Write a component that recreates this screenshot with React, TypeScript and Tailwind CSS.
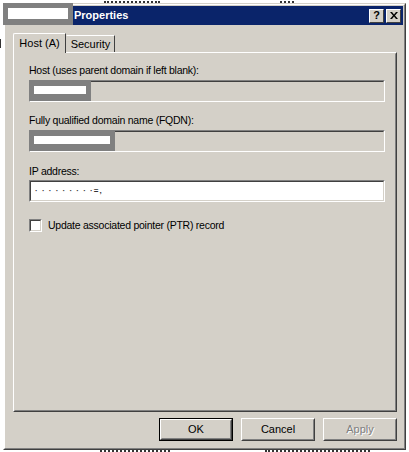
import React from "react";

const font = { fontFamily: '"Liberation Sans", Arial, sans-serif' };

// sunken field, 22px tall
const Field = ({
  disabled,
  maskWidth,
  children,
}: {
  disabled?: boolean;
  maskWidth?: number;
  children?: React.ReactNode;
}) => (
  <div className="h-[22px] border border-t-[#808080] border-l-[#808080] border-b-white border-r-white">
    <div
      className={`relative h-full border border-t-[#404040] border-l-[#404040] border-b-[#d4d0c8] border-r-[#d4d0c8] ${
        disabled ? "bg-[#d4d0c8]" : "bg-white"
      }`}
    >
      {maskWidth ? (
        <div
          className="absolute -left-px -top-px h-[20px] bg-[#808080] p-[5px_5px_5px_4px]"
          style={{ width: maskWidth }}
        >
          <div className="h-[8px] w-full bg-white" />
        </div>
      ) : null}
      {children}
    </div>
  </div>
);

const Button = ({
  label,
  isDefault,
  disabled,
}: {
  label: string;
  isDefault?: boolean;
  disabled?: boolean;
}) => (
  <div
    className={`h-[23px] w-[74px] ${
      isDefault ? "border border-black" : ""
    }`}
  >
    <div className="h-full border border-t-white border-l-white border-b-[#404040] border-r-[#404040]">
      <div
        className={`flex h-full items-center justify-center border border-t-[#d4d0c8] border-l-[#d4d0c8] border-b-[#808080] border-r-[#808080] text-[11px] ${
          disabled
            ? "text-[#808080] [text-shadow:1px_1px_0_#fff]"
            : "text-black"
        }`}
      >
        {label}
      </div>
    </div>
  </div>
);

export default function App() {
  return (
    <div
      className="relative h-[452px] w-[409px] overflow-hidden bg-white"
      style={font}
    >
      {/* bits of the window behind */}
      <div className="flex h-[3px] items-end">
        <div className="ml-[104px] h-[2px] w-[56px] border-b-2 border-dotted border-[#333]" />
        <div className="ml-[120px] h-[2px] w-[14px] border-b-2 border-dotted border-[#333]" />
      </div>

      <div className="flex">
        <div className="w-[3px] pt-[36px]">
          <div className="h-[9px] w-[1px] bg-[#333]" />
        </div>

        {/* dialog frame */}
        <div className="relative h-[447px] w-[403px] border border-t-[#d4d0c8] border-l-white border-b-[#404040] border-r-[#404040] bg-[#d4d0c8]">
          <div className="flex h-full flex-col border border-t-white border-l-white border-b-[#808080] border-r-[#808080] p-px">
            {/* title bar */}
            <div className="flex h-[19px] items-center bg-[#0a246a] pr-[2px]">
              <span className="ml-[68px] text-[11px] font-bold text-white">
                Properties
              </span>
              <div className="ml-auto flex gap-[2px]">
                <div className="flex h-[14px] w-[15px] items-center justify-center border border-t-white border-l-white border-b-[#404040] border-r-[#404040] bg-[#d4d0c8] text-[11px] font-bold leading-none text-black">
                  ?
                </div>
                <div className="flex h-[14px] w-[15px] items-center justify-center border border-t-white border-l-white border-b-[#404040] border-r-[#404040] bg-[#d4d0c8]">
                  <svg width="8" height="7" viewBox="0 0 8 7">
                    <path
                      d="M0 0h2l2 2.5L6 0h2L5 3.5 8 7H6L4 4.5 2 7H0l3-3.5z"
                      fill="#000"
                    />
                  </svg>
                </div>
              </div>
            </div>

            {/* tabs */}
            <div className="ml-[7px] mt-[8px] flex items-end">
              <div className="relative z-10 -mb-px flex h-[20px] w-[53px] items-center justify-center rounded-tl-[2px] border border-b-0 border-t-white border-l-white border-r-[#404040] bg-[#d4d0c8] text-[11px]">
                Host (A)
              </div>
              <div className="flex h-[17px] w-[49px] items-center justify-center border border-b-0 border-t-white border-l-[#d4d0c8] border-r-[#404040] text-[11px]">
                Security
              </div>
            </div>

            {/* tab panel */}
            <div className="ml-[7px] mr-[6px] h-[360px] border border-t-white border-l-white border-b-[#404040] border-r-[#404040]">
              <div className="flex h-full flex-col border border-transparent border-b-[#808080] border-r-[#808080] pl-[14px] pr-[10px] text-[10.5px] tracking-[-0.25px] text-black">
                <div className="mt-[8px] h-[16px] leading-[16px]">
                  Host (uses parent domain if left blank):
                </div>
                <div className="mt-[2px]">
                  <Field disabled maskWidth={61} />
                </div>
                <div className="mt-[10px] h-[16px] leading-[16px]">
                  Fully qualified domain name (FQDN):
                </div>
                <div className="mt-[2px]">
                  <Field disabled maskWidth={85} />
                </div>
                <div className="mt-[11px] h-[16px] leading-[16px]">
                  IP address:
                </div>
                <div className="mt-[1px]">
                  <Field>
                    <div className="flex h-full items-center pl-[4px] text-[8px] font-bold tracking-[1px] text-[#333]">
                      · · · · · · · · ·=,
                    </div>
                  </Field>
                </div>
                <div className="mt-[16px] flex items-center">
                  <div className="h-[13px] w-[13px] border border-t-[#808080] border-l-[#808080] border-b-white border-r-white">
                    <div className="h-full border border-t-[#404040] border-l-[#404040] border-b-[#d4d0c8] border-r-[#d4d0c8] bg-white" />
                  </div>
                  <span className="ml-[6px]">
                    Update associated pointer (PTR) record
                  </span>
                </div>
              </div>
            </div>

            {/* buttons */}
            <div className="mr-[6px] mt-[6px] flex justify-end gap-[8px]">
              <Button label="OK" isDefault />
              <Button label="Cancel" />
              <Button label="Apply" disabled />
            </div>
          </div>

          {/* redacted name over the title */}
          <div className="absolute -left-px -top-px h-[22px] w-[70px] bg-[#808080] p-[5px]">
            <div className="h-[11px] w-full bg-white" />
          </div>
        </div>
      </div>

      <div className="flex h-[2px]">
        <div className="ml-[100px] h-[2px] w-[70px] border-t-2 border-dotted border-[#333]" />
        <div className="ml-[95px] h-[2px] w-[105px] border-t-2 border-dotted border-[#333]" />
      </div>
    </div>
  );
}
